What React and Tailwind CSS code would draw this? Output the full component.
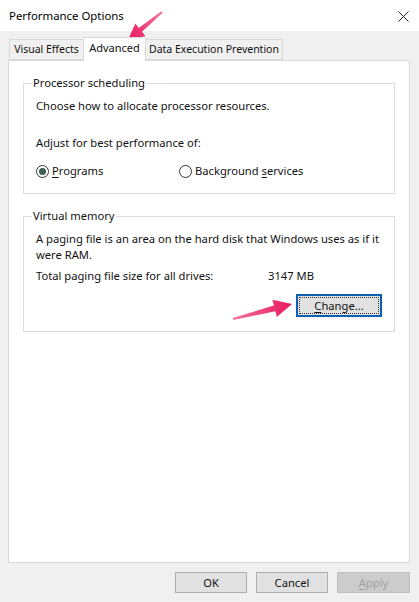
import React from 'react';

const Arrows = () => (
  <svg
    className="absolute inset-0 pointer-events-none"
    width="419"
    height="602"
    viewBox="0 0 419 602"
  >
    <defs>
      <linearGradient id="a1" x1="162" y1="12" x2="128" y2="40" gradientUnits="userSpaceOnUse">
        <stop offset="0" stopColor="#f4739c" />
        <stop offset="1" stopColor="#e8185d" />
      </linearGradient>
      <linearGradient id="a2" x1="233" y1="319" x2="292" y2="304" gradientUnits="userSpaceOnUse">
        <stop offset="0" stopColor="#f4739c" />
        <stop offset="1" stopColor="#e8185d" />
      </linearGradient>
    </defs>
    <polygon
      fill="url(#a1)"
      points="162.6,12.8 142,31.7 145.5,36 128,40 135.3,23.6 138.8,27.9 161.4,11.2"
    />
    <polygon
      fill="url(#a2)"
      points="233.2,320 275.3,311.3 276.8,317.1 292,304 272.4,299.7 273.9,305.5 232.8,318"
    />
  </svg>
);

const Radio = ({ checked, children }) => (
  <div className="flex items-center gap-[3px]">
    <span className="w-[13px] h-[13px] rounded-full border border-[#333] bg-white flex items-center justify-center">
      {checked && <span className="w-[7px] h-[7px] rounded-full bg-[#3c5f52]" />}
    </span>
    <span>{children}</span>
  </div>
);

const Group = ({ label, className, children }) => (
  <div className={`relative border border-[#dcdcdc] ${className}`}>
    <span className="absolute -top-[9px] left-[8px] bg-white px-[1px] leading-4">{label}</span>
    {children}
  </div>
);

const DialogButton = ({ children, disabled }) => (
  <button
    className={
      disabled
        ? 'w-[73px] h-[21px] border border-[#bfbfbf] bg-[#cccccc] text-[#a0a0a0] leading-none'
        : 'w-[72px] h-[21px] border border-[#adadad] bg-[#e1e1e1] text-[#111] leading-none'
    }
  >
    {children}
  </button>
);

const App = () => {
  return (
    <div
      className="relative w-[419px] h-[602px] bg-[#f0f0f0] text-[11.2px] text-[#111] overflow-hidden"
      style={{ fontFamily: '"Noto Sans", "Open Sans", sans-serif' }}
    >
      {/* title bar */}
      <div className="h-[31px] bg-white flex items-center justify-between pl-[9px] pr-[10px]">
        <span className="text-[11.4px] text-black">Performance Options</span>
        <svg width="11" height="11" viewBox="0 0 11 11" className="mt-[1px]">
          <path d="M0.5 0.5 L10.5 10.5 M10.5 0.5 L0.5 10.5" stroke="#222" strokeWidth="1" />
        </svg>
      </div>

      {/* tabs */}
      <div className="flex items-end pl-[9px] pt-[6px] relative z-10 text-[10.5px]">
        <div className="w-[74px] h-[21px] border border-r-0 border-[#d9d9d9] bg-[#f0f0f0] flex items-center justify-center mb-[1px]">
          Visual Effects
        </div>
        <div className="w-[63px] h-[24px] border border-b-0 border-[#d9d9d9] bg-white flex items-center justify-center pb-[3px] text-[11px]">
          Advanced
        </div>
        <div className="w-[137px] h-[21px] border border-l-0 border-[#d9d9d9] bg-[#f0f0f0] flex items-center justify-center mb-[1px]">
          Data Execution Prevention
        </div>
      </div>

      {/* panel */}
      <div className="ml-[8px] -mt-[1px] w-[402px] h-[503px] border border-[#d9d9d9] bg-white px-[14px] pt-[22px]">
        <Group label="Processor scheduling" className="h-[111px] pl-[12px] pt-[14px]">
          <div className="leading-4">Choose how to allocate processor resources.</div>
          <div className="leading-4 mt-[21px]">Adjust for best performance of:</div>
          <div className="flex leading-4 mt-[12px]">
            <div className="w-[143px]">
              <Radio checked>
                <span className="underline underline-offset-2">P</span>rograms
              </Radio>
            </div>
            <Radio>
              Background <span className="underline underline-offset-2">s</span>ervices
            </Radio>
          </div>
        </Group>

        <Group label="Virtual memory" className="mt-[22px] h-[116px] pl-[12px] pr-[12px] pt-[14px]">
          <div className="leading-4 whitespace-nowrap">
            A paging file is an area on the hard disk that Windows uses as if it
            <br />
            were RAM.
          </div>
          <div className="flex leading-4 mt-[5px]">
            <span className="w-[232px]">Total paging file size for all drives:</span>
            <span>3147 MB</span>
          </div>
          <div className="flex justify-end mt-[10px]">
            <button className="w-[86px] h-[23px] border-2 border-[#0a5fb0] bg-[#e1e1e1] p-[1px] leading-none">
              <span className="flex items-center justify-center w-full h-full border border-dotted border-[#333]">
                <span>
                  <span className="underline underline-offset-2">C</span>hange...
                </span>
              </span>
            </button>
          </div>
        </Group>
      </div>

      {/* dialog buttons */}
      <div className="flex justify-end gap-[9px] pr-[9px] mt-[9px]">
        <DialogButton>OK</DialogButton>
        <DialogButton>Cancel</DialogButton>
        <DialogButton disabled>
          <span className="underline underline-offset-2">A</span>pply
        </DialogButton>
      </div>

      <Arrows />
    </div>
  );
};

export default App;
